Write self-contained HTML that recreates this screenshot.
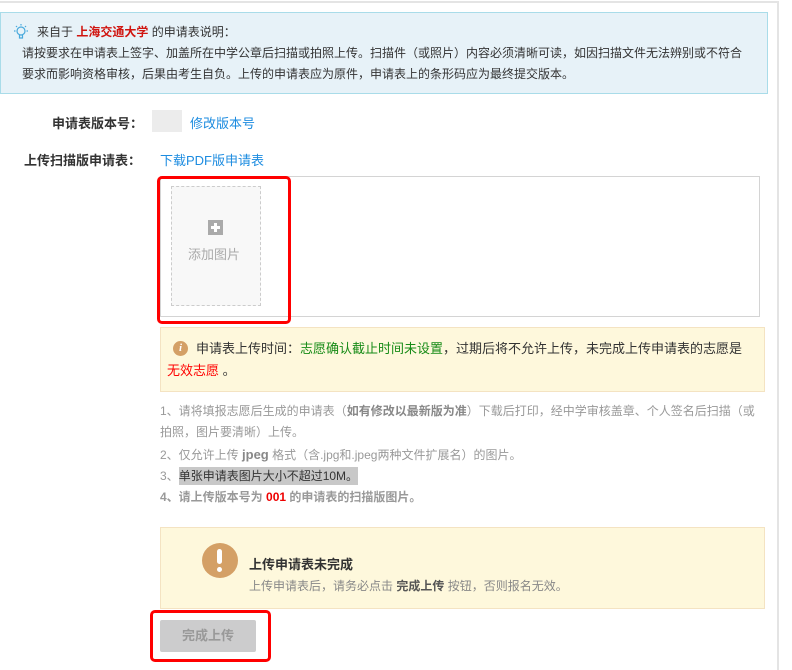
<!DOCTYPE html><html><head><meta charset="utf-8"><style>
*{margin:0;padding:0;box-sizing:border-box}
body{width:792px;height:669px;background:#fff;font-family:"Liberation Sans","Noto Sans CJK SC",sans-serif;font-size:12px;color:#333;position:relative;overflow:hidden}
.a{position:absolute;white-space:nowrap}
.b{font-weight:bold}
</style></head><body>
<div class="a" style="left:0;top:1px;width:779px;height:2px;background:#e4e4e4"></div>
<div class="a" style="left:777px;top:1px;width:2px;height:669px;background:#e4e4e4"></div>
<div class="a" style="left:0;top:12px;width:768px;height:82px;background:#e7f2f8;border:1px solid #a9dce9"></div>
<svg class="a" style="left:12px;top:23px" width="18" height="18" viewBox="0 0 18 18" fill="none" stroke="#48a9dc" stroke-width="1.2"><circle cx="9" cy="8" r="4"/><path d="M7.5 12v3h3v-3M9 1v1.5M2 8h1.5M14.5 8H16M4 3l1 1M14 3l-1 1"/></svg>
<div class="a" style="left:37px;top:24px;line-height:16px">来自于 <span class="b" style="color:#d0140f">上海交通大学</span> 的申请表说明：</div>
<div class="a" style="left:22px;top:43px;line-height:21px">请按要求在申请表上签字、加盖所在中学公章后扫描或拍照上传。扫描件（或照片）内容必须清晰可读，如因扫描文件无法辨别或不符合<br>要求而影响资格审核，后果由考生自负。上传的申请表应为原件，申请表上的条形码应为最终提交版本。</div>
<div class="a b" style="left:52px;top:113px;font-size:13px">申请表版本号：</div>
<div class="a" style="left:152px;top:110px;width:30px;height:22px;background:#ececec"></div>
<div class="a" style="left:190px;top:113px;font-size:13px;color:#1d8ce0">修改版本号</div>
<div class="a b" style="left:24px;top:150px;font-size:13px">上传扫描版申请表：</div>
<div class="a" style="left:160px;top:150px;font-size:13px;color:#1d8ce0">下载PDF版申请表</div>
<div class="a" style="left:160px;top:176px;width:600px;height:141px;border:1px solid #d4d4d4"></div>
<div class="a" style="left:171px;top:186px;width:90px;height:120px;border:1px dashed #ccc;background:#f8f8f8"></div>
<div class="a" style="left:208px;top:220px;width:15px;height:15px;background:#aaa"><div class="a" style="left:3px;top:6px;width:9px;height:3px;background:#fff"></div><div class="a" style="left:6px;top:3px;width:3px;height:9px;background:#fff"></div></div>
<div class="a" style="left:188px;top:244px;font-size:13px;color:#aaa">添加图片</div>
<div class="a" style="left:157px;top:176px;width:134px;height:148px;border:3px solid #f00;border-radius:5px"></div>
<div class="a" style="left:160px;top:327px;width:605px;height:65px;background:#fef8dc;border:1px solid #f4e3c2"></div>
<div class="a" style="left:173px;top:341px;width:15px;height:15px;border-radius:50%;background:#d4a066;color:#fff;font-size:11px;text-align:center;line-height:15px;font-weight:bold;font-family:'Liberation Serif',serif;font-style:italic">i</div>
<div class="a" style="left:196px;top:338px;font-size:13px;line-height:22px">申请表上传时间：<span style="color:#178b17">志愿确认截止时间未设置</span>，过期后将不允许上传，未完成上传申请表的志愿是<br><span style="color:#f00;margin-left:-29px">无效志愿</span> 。</div>
<div class="a" style="left:160px;top:401px;color:#999;line-height:21.3px">1、请将填报志愿后生成的申请表（<b style="color:#888">如有修改以最新版为准</b>）下载后打印，经中学审核盖章、个人签名后扫描（或<br>拍照，图片要清晰）上传。<br>2、仅允许上传 <b style="color:#888;font-size:13px">jpeg</b> 格式（含.jpg和.jpeg两种文件扩展名）的图片。<br>3、<span style="background:#c8c8c8;color:#333;padding:2px 0">单张申请表图片大小不超过10M。</span><br><b style="color:#999">4、请上传版本号为 <span style="color:#e00">001</span> 的申请表的扫描版图片。</b></div>
<div class="a" style="left:160px;top:527px;width:605px;height:82px;background:#fef8dc;border:1px solid #f4e3c2"></div>
<div class="a" style="left:202px;top:543px;width:36px;height:35px;border-radius:50%;background:#d4a066"><div class="a" style="left:15px;top:6px;width:5px;height:15px;border-radius:3px;background:#fff"></div><div class="a" style="left:15px;top:24px;width:5px;height:5px;border-radius:50%;background:#fff"></div></div>
<div class="a b" style="left:249px;top:554px;font-size:13px">上传申请表未完成</div>
<div class="a" style="left:249px;top:577px;color:#888">上传申请表后，请务必点击 <b style="color:#555">完成上传</b> 按钮，否则报名无效。</div>
<div class="a b" style="left:160px;top:620px;width:96px;height:32px;background:#cccccd;border-radius:2px;color:#999;font-size:13px;text-align:center;line-height:32px">完成上传</div>
<div class="a" style="left:150px;top:610px;width:121px;height:52px;border:3px solid #f00;border-radius:5px"></div>
</body></html>
